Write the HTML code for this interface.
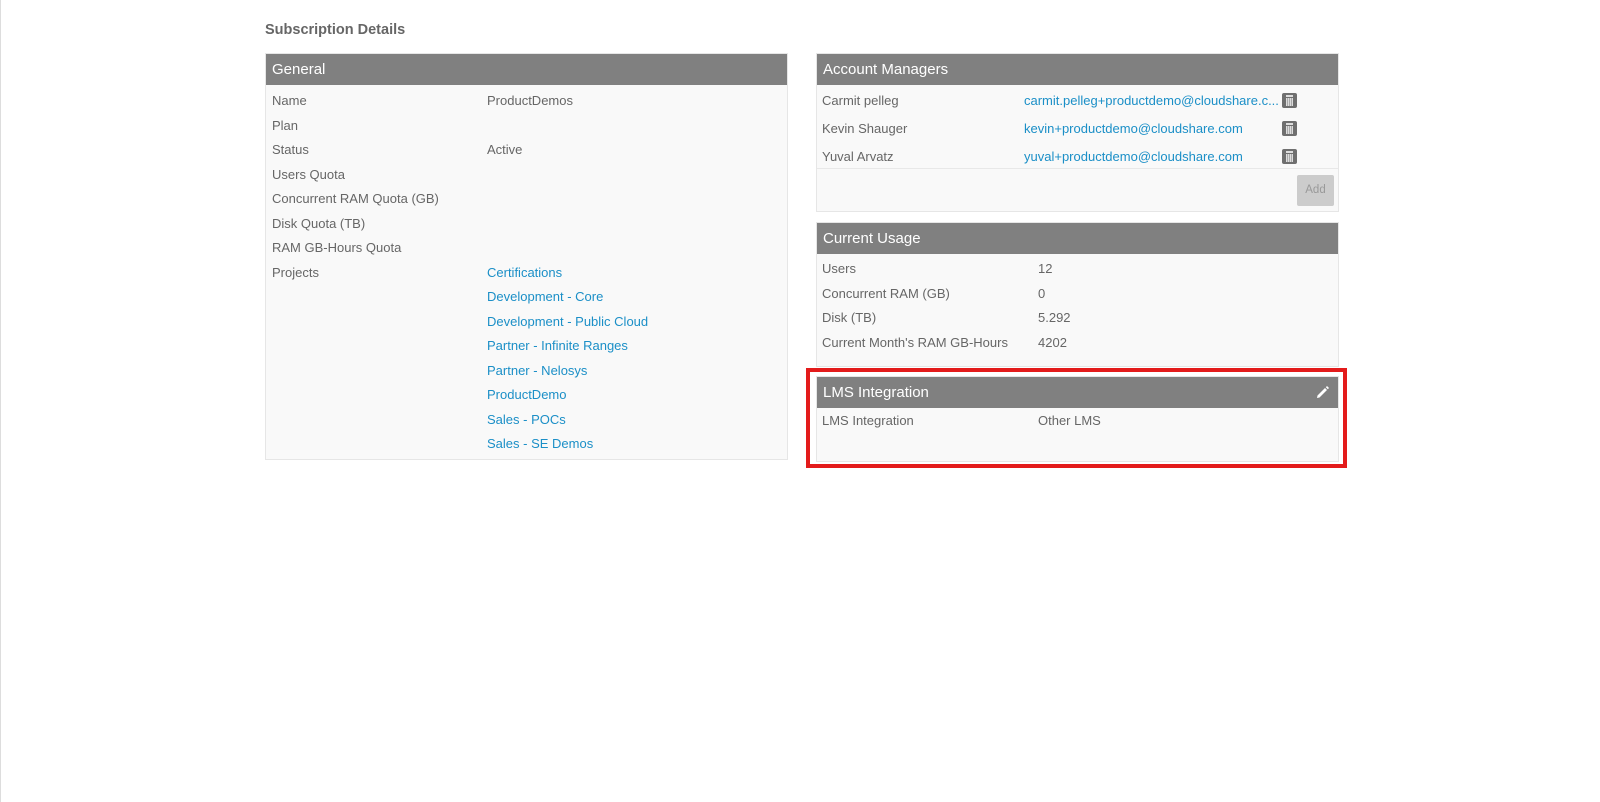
<!DOCTYPE html>
<html><head><style>
*{margin:0;padding:0;box-sizing:border-box}
body{width:1600px;height:802px;background:#fff;font-family:"Liberation Sans",sans-serif;font-size:13px;color:#666;position:relative;overflow:hidden;border-left:1px solid #ddd}
.t{position:absolute;left:264px;top:22px;font-weight:bold;font-size:14.5px;color:#666}
.p{position:absolute;background:#f9f9f9;border:1px solid #e6e6e6}
.h{height:31px;background:#808080;color:#fff;font-size:15px;line-height:31px;padding-left:6px;position:relative}
.r{position:absolute;white-space:nowrap}
a{color:#1b8fc7;text-decoration:none}
.tr{position:absolute;width:15px;height:15px;background:#6f6f6f;border-radius:2px}
.tr:before{content:"";position:absolute;left:4px;top:2px;width:7px;height:2px;background:#ddd}
.tr:after{content:"";position:absolute;left:4px;top:5px;width:7px;height:8px;background:repeating-linear-gradient(90deg,#ddd 0 1px,#aaa 1px 2px)}
</style></head><body>
<div class="t">Subscription Details</div>

<div class="p" style="left:264px;top:53px;width:523px;height:407px">
<div class="h">General</div>
</div>
<div class="r" style="left:271px;top:89px;line-height:24.5px">Name<br>Plan<br>Status<br>Users Quota<br>Concurrent RAM Quota (GB)<br>Disk Quota (TB)<br>RAM GB-Hours Quota<br>Projects</div>
<div class="r" style="left:486px;top:89px;line-height:24.5px">ProductDemos<br><br>Active<br><br><br><br><br><a>Certifications</a><br><a>Development - Core</a><br><a>Development - Public Cloud</a><br><a>Partner - Infinite Ranges</a><br><a>Partner - Nelosys</a><br><a>ProductDemo</a><br><a>Sales - POCs</a><br><a>Sales - SE Demos</a></div>

<div class="p" style="left:815px;top:53px;width:523px;height:159px">
<div class="h">Account Managers</div>
<div style="position:absolute;left:0;right:0;top:114px;border-top:1px solid #e8e8e8"></div>
<div style="position:absolute;left:480px;top:121px;width:37px;height:31px;background:#ccc;border-radius:2px;color:#999;font-size:11.5px;line-height:31px;text-align:center">Add</div>
</div>
<div class="r" style="left:821px;top:87px;line-height:28px">Carmit pelleg<br>Kevin Shauger<br>Yuval Arvatz</div>
<div class="r" style="left:1023px;top:87px;line-height:28px"><a>carmit.pelleg+productdemo@cloudshare.c...</a><br><a>kevin+productdemo@cloudshare.com</a><br><a>yuval+productdemo@cloudshare.com</a></div>
<div class="tr" style="left:1281px;top:93px"></div>
<div class="tr" style="left:1281px;top:121px"></div>
<div class="tr" style="left:1281px;top:149px"></div>

<div class="p" style="left:815px;top:222px;width:523px;height:145px">
<div class="h">Current Usage</div>
</div>
<div class="r" style="left:821px;top:257px;line-height:24.5px">Users<br>Concurrent RAM (GB)<br>Disk (TB)<br>Current Month's RAM GB-Hours</div>
<div class="r" style="left:1037px;top:257px;line-height:24.5px">12<br>0<br>5.292<br>4202</div>

<div class="p" style="left:815px;top:376px;width:523px;height:86px">
<div class="h">LMS Integration
<svg style="position:absolute;right:9px;top:9px" width="13" height="13" viewBox="0 0 13 13"><path d="M1 12 L1.5 9.5 L9 2 L11 4 L3.5 11.5 Z" fill="#fff"/><path d="M9.8 1.2 L11 0 L13 2 L11.8 3.2Z" fill="#fff"/></svg></div>
</div>
<div class="r" style="left:821px;top:413px">LMS Integration</div>
<div class="r" style="left:1037px;top:413px">Other LMS</div>
<div style="position:absolute;left:805px;top:368px;width:541px;height:100px;border:4px solid #e31b1b"></div>
</body></html>
